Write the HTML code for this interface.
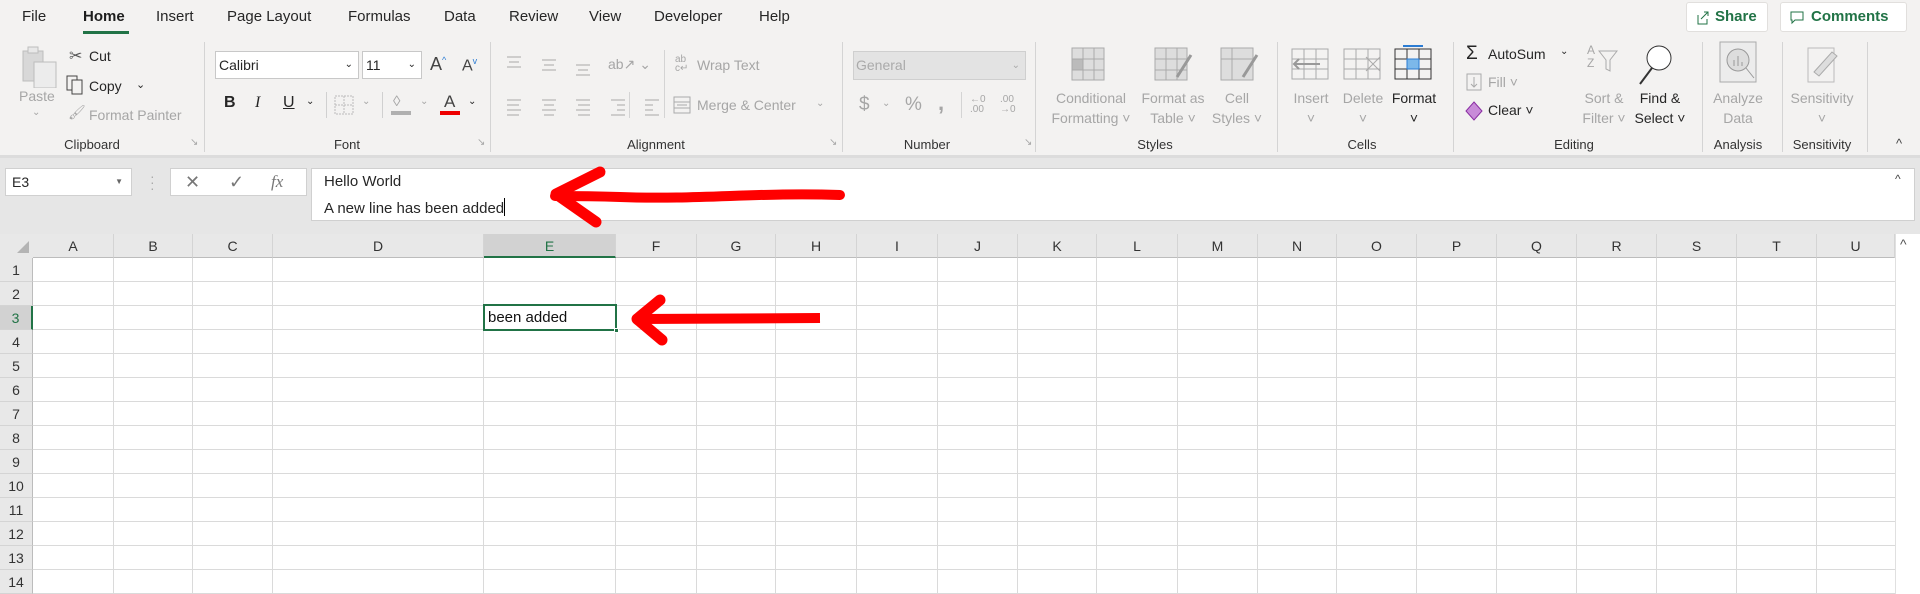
<!DOCTYPE html>
<html><head><meta charset="utf-8">
<style>
*{margin:0;padding:0;box-sizing:border-box}
body{width:1920px;height:594px;overflow:hidden;background:#fff;font-family:"Liberation Sans",sans-serif;position:relative;color:#262626}
.a{position:absolute;white-space:nowrap}
.tab{position:absolute;top:8px;font-size:15px;color:#262626}
.lbl{position:absolute;top:137px;font-size:13px;color:#333;transform:translateX(-50%)}
.g{color:#a6a6a6}
.sep{position:absolute;top:42px;width:1px;height:110px;background:#d4d4d4}
.rb{font-size:14px}
.ch{position:absolute;top:234px;height:24px;font-size:14px;color:#333;text-align:center;line-height:24px;border-right:1px solid #d4d4d4;border-bottom:1px solid #bcbcbc;background:#e8e8e8}
.rh{position:absolute;left:0;width:33px;height:24px;font-size:14px;color:#333;text-align:center;line-height:24px;border-bottom:1px solid #d4d4d4;border-right:1px solid #bcbcbc;background:#e8e8e8}
.vl{position:absolute;top:258px;width:1px;height:336px;background:#dadada}
.hl{position:absolute;left:33px;width:1862px;height:1px;background:#dadada}
.t2{font-size:14px;transform:translateX(-50%);text-align:center;line-height:20px}
</style></head><body>
<div class="a" style="left:0;top:0;width:1920px;height:157px;background:#f3f2f1"></div>
<div class="a" style="left:0;top:155px;width:1920px;height:79px;background:#e6e6e6"></div>
<div class="a" style="left:0;top:155px;width:1920px;height:3px;background:#dcdcdc"></div>

<div class="tab" style="left:22px">File</div>
<div class="tab" style="left:83px;color:#1e1e1e;font-weight:bold">Home</div>
<div class="a" style="left:83px;top:31px;width:46px;height:3px;background:#217346"></div>
<div class="tab" style="left:156px">Insert</div>
<div class="tab" style="left:227px">Page Layout</div>
<div class="tab" style="left:348px">Formulas</div>
<div class="tab" style="left:444px">Data</div>
<div class="tab" style="left:509px">Review</div>
<div class="tab" style="left:589px">View</div>
<div class="tab" style="left:654px">Developer</div>
<div class="tab" style="left:759px">Help</div>

<div class="a" style="left:1686px;top:2px;width:82px;height:30px;background:#fff;border:1px solid #e1dfdd;border-radius:3px;color:#217346;font-weight:bold;font-size:15px;line-height:28px;padding-left:28px">Share
<svg style="position:absolute;left:8px;top:7px" width="14" height="15"><path d="M3 5v9h9V9M6 9l7-7M9 2h4v4" stroke="#217346" fill="none"/></svg></div>
<div class="a" style="left:1780px;top:2px;width:127px;height:30px;background:#fff;border:1px solid #e1dfdd;border-radius:3px;color:#217346;font-weight:bold;font-size:15px;line-height:28px;padding-left:30px">Comments
<svg style="position:absolute;left:9px;top:8px" width="14" height="14"><path d="M1 1h12v8H5l-3 3V9H1z" stroke="#217346" fill="none"/></svg></div>

<div class="sep" style="left:204px"></div><div class="sep" style="left:490px"></div><div class="sep" style="left:842px"></div>
<div class="sep" style="left:1035px"></div><div class="sep" style="left:1277px"></div><div class="sep" style="left:1453px"></div>
<div class="sep" style="left:1702px"></div><div class="sep" style="left:1782px"></div><div class="sep" style="left:1867px"></div>

<div class="lbl" style="left:92px">Clipboard</div><div class="lbl" style="left:347px">Font</div><div class="lbl" style="left:656px">Alignment</div>
<div class="lbl" style="left:927px">Number</div><div class="lbl" style="left:1155px">Styles</div><div class="lbl" style="left:1362px">Cells</div>
<div class="lbl" style="left:1574px">Editing</div><div class="lbl" style="left:1738px">Analysis</div><div class="lbl" style="left:1822px">Sensitivity</div>
<div class="a g" style="left:190px;top:137px;font-size:10px">↘</div><div class="a g" style="left:477px;top:137px;font-size:10px">↘</div>
<div class="a g" style="left:829px;top:137px;font-size:10px">↘</div><div class="a g" style="left:1024px;top:137px;font-size:10px">↘</div>
<div class="a" style="left:1896px;top:136px;font-size:13px;color:#444">^</div>

<!-- clipboard -->
<svg class="a" style="left:22px;top:46px" width="36" height="42"><rect x="1" y="5" width="20" height="30" fill="#d8d8d8" stroke="#bdbdbd"/><rect x="6" y="1" width="10" height="6" fill="#e8e8e8" stroke="#bdbdbd"/><rect x="12" y="16" width="22" height="26" fill="#ececec" stroke="#bdbdbd"/></svg>
<div class="a g" style="left:19px;top:88px;font-size:14px">Paste</div>
<div class="a g" style="left:32px;top:107px;font-size:10px">⌄</div>
<div class="a" style="left:69px;top:46px;font-size:16px;color:#555">✂</div>
<div class="a rb" style="left:89px;top:48px">Cut</div>
<svg class="a" style="left:66px;top:75px" width="18" height="20"><rect x="1" y="1" width="10" height="14" fill="none" stroke="#444"/><rect x="6" y="5" width="10" height="14" fill="#f3f2f1" stroke="#444"/></svg>
<div class="a rb" style="left:89px;top:78px">Copy</div><div class="a" style="left:136px;top:78px;font-size:11px">⌄</div>
<div class="a g" style="left:68px;top:104px;font-size:14px">🖌</div>
<div class="a g rb" style="left:89px;top:107px">Format Painter</div>

<!-- font -->
<div class="a" style="left:215px;top:51px;width:144px;height:28px;background:#fff;border:1px solid #c8c8c8;font-size:14px;line-height:26px;padding-left:3px">Calibri<span style="position:absolute;right:5px;font-size:10px">⌄</span></div>
<div class="a" style="left:362px;top:51px;width:60px;height:28px;background:#fff;border:1px solid #c8c8c8;font-size:14px;line-height:26px;padding-left:3px">11<span style="position:absolute;right:5px;font-size:10px">⌄</span></div>
<div class="a" style="left:430px;top:54px;font-size:18px;color:#444">A<sup style="font-size:9px;color:#2b7cd3">^</sup></div>
<div class="a" style="left:462px;top:56px;font-size:16px;color:#444">A<sup style="font-size:9px;color:#2b7cd3">v</sup></div>
<div class="a" style="left:224px;top:94px;font-size:16px;font-weight:bold">B</div>
<div class="a" style="left:255px;top:94px;font-size:16px;font-style:italic;font-family:'Liberation Serif',serif">I</div>
<div class="a" style="left:283px;top:94px;font-size:16px;text-decoration:underline">U</div>
<div class="a" style="left:306px;top:96px;font-size:10px">⌄</div>
<div class="a" style="left:326px;top:92px;width:1px;height:26px;background:#d0d0d0"></div>
<svg class="a" style="left:334px;top:95px" width="20" height="20"><rect x="1" y="1" width="18" height="18" fill="none" stroke="#bbb" stroke-dasharray="2 1"/><path d="M10 1v18M1 10h18" stroke="#bbb" stroke-dasharray="2 1"/></svg>
<div class="a g" style="left:362px;top:96px;font-size:10px">⌄</div>
<div class="a" style="left:382px;top:92px;width:1px;height:26px;background:#d0d0d0"></div>
<div class="a g" style="left:393px;top:93px;font-size:15px">◊</div>
<div class="a" style="left:391px;top:111px;width:20px;height:4px;background:#b0b0b0"></div>
<div class="a g" style="left:420px;top:96px;font-size:10px">⌄</div>
<div class="a" style="left:444px;top:92px;font-size:17px;color:#444">A</div>
<div class="a" style="left:440px;top:111px;width:20px;height:4px;background:#e00"></div>
<div class="a" style="left:468px;top:96px;font-size:10px">⌄</div>

<!-- alignment -->
<svg class="a" style="left:505px;top:55px" width="170" height="70" stroke="#a8a8a8">
<path d="M2 2h14M4 7h10M2 12h14M37 5h14M39 10h10M37 15h14M71 10h14M73 15h10M71 20h14"/>
<path d="M2 45h14M2 50h12M2 55h14M2 60h12M37 45h14M39 50h10M37 55h14M39 60h10M71 45h14M73 50h12M71 55h14M73 60h12M106 45h14M112 50h8M112 55h8M106 60h14M140 45h14M140 50h8M140 55h8M140 60h14"/>
</svg>
<div class="a" style="left:629px;top:92px;width:1px;height:26px;background:#d4d4d4"></div>
<div class="a g" style="left:608px;top:56px;font-size:14px">ab↗ ⌄</div>
<div class="a" style="left:664px;top:50px;width:1px;height:68px;background:#d4d4d4"></div>
<div class="a g" style="left:675px;top:55px;font-size:10px;line-height:9px">ab<br>c↵</div>
<div class="a g" style="left:697px;top:57px;font-size:14px">Wrap Text</div>
<svg class="a" style="left:673px;top:96px" width="18" height="18"><rect x="1" y="1" width="16" height="16" fill="none" stroke="#aaa"/><path d="M1 6h16M1 12h16M4 9h10" stroke="#aaa"/></svg>
<div class="a g" style="left:697px;top:97px;font-size:14px">Merge &amp; Center</div>
<div class="a g" style="left:816px;top:98px;font-size:10px">⌄</div>

<!-- number -->
<div class="a" style="left:853px;top:51px;width:173px;height:29px;background:#e3e3e3;border:1px solid #cfcfcf;font-size:14px;line-height:27px;padding-left:2px;color:#aaa">General<span style="position:absolute;right:5px;font-size:10px">⌄</span></div>
<div class="a g" style="left:859px;top:94px;font-size:19px">$</div>
<div class="a g" style="left:882px;top:98px;font-size:10px">⌄</div>
<div class="a g" style="left:905px;top:94px;font-size:19px">%</div>
<div class="a g" style="left:938px;top:90px;font-size:22px;font-weight:bold">,</div>
<div class="a" style="left:961px;top:92px;width:1px;height:26px;background:#d4d4d4"></div>
<div class="a g" style="left:970px;top:95px;font-size:10px;line-height:10px">←0<br>.00</div>
<div class="a g" style="left:1000px;top:95px;font-size:10px;line-height:10px">.00<br>→0</div>

<!-- styles -->
<svg class="a" style="left:1071px;top:47px" width="190" height="40" fill="#ddd" stroke="#aaa">
<rect x="1" y="1" width="32" height="32"/><path d="M1 12h32M1 23h32M12 1v32M23 1v32" fill="none"/><rect x="1" y="12" width="11" height="11" fill="#bbb"/>
<rect x="84" y="1" width="32" height="32"/><path d="M84 12h32M84 23h32M95 1v32M106 1v32" fill="none"/><path d="M120 8l-14 22" stroke="#999" stroke-width="3"/>
<rect x="150" y="1" width="32" height="32"/><path d="M150 12h32M161 1v32" fill="none"/><path d="M186 8l-14 22" stroke="#999" stroke-width="3"/></svg>
<div class="a g t2" style="left:1091px;top:88px">Conditional<br>Formatting ˅</div>
<div class="a g t2" style="left:1173px;top:88px">Format as<br>Table ˅</div>
<div class="a g t2" style="left:1237px;top:88px">Cell<br>Styles ˅</div>

<!-- cells -->
<svg class="a" style="left:1291px;top:45px" width="150" height="45" stroke="#aaa" fill="none">
<rect x="1" y="4" width="36" height="30"/><path d="M1 14h36M1 24h36M13 4v30M25 4v30"/><path d="M4 19h25M8 14l-5 5 5 5" stroke="#999" stroke-width="2"/>
<rect x="53" y="4" width="36" height="30"/><path d="M53 14h36M53 24h36M65 4v30M77 4v30"/><path d="M75 12l14 14M89 12l-14 14"/>
<rect x="104" y="4" width="36" height="30" stroke="#333"/><path d="M104 14h36M104 24h36M116 4v30M128 4v30" stroke="#333"/><rect x="116" y="14" width="12" height="10" fill="#7cb8ea" stroke="#2b7cd3"/><path d="M112 1h20" stroke="#2b7cd3" stroke-width="2"/></svg>
<div class="a g t2" style="left:1311px;top:88px">Insert<br>˅</div>
<div class="a g t2" style="left:1363px;top:88px">Delete<br>˅</div>
<div class="a t2" style="left:1414px;top:88px">Format<br>˅</div>

<!-- editing -->
<div class="a" style="left:1466px;top:43px;font-size:19px">Σ</div>
<div class="a" style="left:1488px;top:46px;font-size:14px">AutoSum</div>
<div class="a" style="left:1560px;top:46px;font-size:10px">⌄</div>
<svg class="a" style="left:1466px;top:73px" width="16" height="18"><rect x="1" y="1" width="14" height="16" fill="none" stroke="#aaa"/><path d="M8 4v10M5 11l3 3 3-3" stroke="#aaa" fill="none"/></svg>
<div class="a g" style="left:1488px;top:74px;font-size:14px">Fill ˅</div>
<svg class="a" style="left:1465px;top:101px" width="18" height="20"><path d="M9 1l8 9-8 9-8-9z" fill="#c88bd8" stroke="#8a2ea3"/></svg>
<div class="a" style="left:1488px;top:102px;font-size:14px">Clear ˅</div>
<div class="a g" style="left:1587px;top:44px;font-size:12px;line-height:13px">A<br>Z</div>
<svg class="a" style="left:1598px;top:50px" width="20" height="22"><path d="M1 1h18l-7 9v11l-4-2V10z" fill="none" stroke="#aaa"/></svg>
<svg class="a" style="left:1637px;top:44px" width="36" height="42"><circle cx="22" cy="14" r="12" fill="#fff" stroke="#333"/><path d="M15 24L3 40" stroke="#333" stroke-width="2"/></svg>
<div class="a g t2" style="left:1604px;top:88px">Sort &amp;<br>Filter ˅</div>
<div class="a t2" style="left:1660px;top:88px">Find &amp;<br>Select ˅</div>

<svg class="a" style="left:1718px;top:40px" width="40" height="46"><rect x="2" y="2" width="36" height="40" fill="#ececec" stroke="#aaa"/><circle cx="20" cy="20" r="11" fill="#ddd" stroke="#999"/><path d="M16 26v-6M20 26v-10M24 26v-4M28 28l8 10" stroke="#999"/></svg>
<div class="a g t2" style="left:1738px;top:88px">Analyze<br>Data</div>
<svg class="a" style="left:1806px;top:40px" width="34" height="46"><rect x="2" y="8" width="26" height="34" fill="none" stroke="#bbb"/><path d="M8 32l18-20 5 4-18 20z" fill="#ddd" stroke="#aaa"/></svg>
<div class="a g t2" style="left:1822px;top:88px">Sensitivity<br>˅</div>

<!-- formula bar -->
<div class="a" style="left:5px;top:168px;width:127px;height:28px;background:#fff;border:1px solid #d0d0d0;font-size:14px;line-height:26px;padding-left:6px">E3<span style="position:absolute;right:8px;font-size:8px;color:#666">▼</span></div>
<div class="a" style="left:150px;top:173px;color:#aaa;font-size:14px;line-height:6px">·<br>·<br>·</div>
<div class="a" style="left:170px;top:168px;width:137px;height:28px;background:#fff;border:1px solid #d0d0d0;font-size:18px;line-height:26px;color:#777">
<span style="position:absolute;left:14px">✕</span><span style="position:absolute;left:58px">✓</span><span style="position:absolute;left:100px;font-family:'Liberation Serif',serif;font-style:italic;font-size:17px">fx</span></div>
<div class="a" style="left:311px;top:168px;width:1604px;height:53px;background:#fff;border:1px solid #d0d0d0"></div>
<div class="a" style="left:324px;top:173px;font-size:15px">Hello World</div>
<div class="a" style="left:324px;top:198px;font-size:15px">A new line has been added<span style="display:inline-block;width:1px;height:18px;background:#000;vertical-align:-3px"></span></div>
<div class="a" style="left:1895px;top:172px;font-size:12px;color:#444">^</div>

<div class="a" style="left:0;top:234px;width:1895px;height:24px;background:#e8e8e8"></div>
<svg class="a" style="left:16px;top:240px" width="14" height="14"><path d="M13 1v12H1z" fill="#b4b4b4"/></svg>
<div class="ch" style="left:33px;width:81px">A</div><div class="ch" style="left:114px;width:79px">B</div><div class="ch" style="left:193px;width:80px">C</div>
<div class="ch" style="left:273px;width:211px">D</div>
<div class="ch" style="left:484px;width:132px;background:#d2d2d2;color:#217346;border-bottom:2px solid #217346">E</div>
<div class="ch" style="left:616px;width:81px">F</div><div class="ch" style="left:697px;width:79px">G</div><div class="ch" style="left:776px;width:81px">H</div>
<div class="ch" style="left:857px;width:81px">I</div><div class="ch" style="left:938px;width:80px">J</div><div class="ch" style="left:1018px;width:79px">K</div>
<div class="ch" style="left:1097px;width:81px">L</div><div class="ch" style="left:1178px;width:80px">M</div><div class="ch" style="left:1258px;width:79px">N</div>
<div class="ch" style="left:1337px;width:80px">O</div><div class="ch" style="left:1417px;width:80px">P</div><div class="ch" style="left:1497px;width:80px">Q</div>
<div class="ch" style="left:1577px;width:80px">R</div><div class="ch" style="left:1657px;width:80px">S</div><div class="ch" style="left:1737px;width:80px">T</div>
<div class="ch" style="left:1817px;width:78px">U</div>
<div class="a" style="left:1895px;top:234px;width:25px;height:360px;background:#fff;border-left:1px solid #e0e0e0"></div>
<div class="a" style="left:1900px;top:236px;font-size:14px;color:#555">^</div>

<div class="rh" style="top:258px">1</div><div class="rh" style="top:282px">2</div>
<div class="rh" style="top:306px;background:#d2d2d2;color:#217346;border-right:2px solid #217346">3</div>
<div class="rh" style="top:330px">4</div><div class="rh" style="top:354px">5</div><div class="rh" style="top:378px">6</div>
<div class="rh" style="top:402px">7</div><div class="rh" style="top:426px">8</div><div class="rh" style="top:450px">9</div>
<div class="rh" style="top:474px">10</div><div class="rh" style="top:498px">11</div><div class="rh" style="top:522px">12</div>
<div class="rh" style="top:546px">13</div><div class="rh" style="top:570px">14</div>

<div class="vl" style="left:113px"></div><div class="vl" style="left:192px"></div><div class="vl" style="left:272px"></div>
<div class="vl" style="left:483px"></div><div class="vl" style="left:615px"></div><div class="vl" style="left:696px"></div>
<div class="vl" style="left:775px"></div><div class="vl" style="left:856px"></div><div class="vl" style="left:937px"></div>
<div class="vl" style="left:1017px"></div><div class="vl" style="left:1096px"></div><div class="vl" style="left:1177px"></div>
<div class="vl" style="left:1257px"></div><div class="vl" style="left:1336px"></div><div class="vl" style="left:1416px"></div>
<div class="vl" style="left:1496px"></div><div class="vl" style="left:1576px"></div><div class="vl" style="left:1656px"></div>
<div class="vl" style="left:1736px"></div><div class="vl" style="left:1816px"></div>
<div class="hl" style="top:281px"></div><div class="hl" style="top:305px"></div><div class="hl" style="top:329px"></div>
<div class="hl" style="top:353px"></div><div class="hl" style="top:377px"></div><div class="hl" style="top:401px"></div>
<div class="hl" style="top:425px"></div><div class="hl" style="top:449px"></div><div class="hl" style="top:473px"></div>
<div class="hl" style="top:497px"></div><div class="hl" style="top:521px"></div><div class="hl" style="top:545px"></div>
<div class="hl" style="top:569px"></div><div class="hl" style="top:593px"></div>

<div class="a" style="left:483px;top:304px;width:134px;height:27px;border:2px solid #217346;background:#fff;font-size:15px;line-height:23px;padding-left:3px;color:#111">been added</div>
<div class="a" style="left:614px;top:328px;width:5px;height:5px;background:#217346;border:1px solid #fff"></div>

<svg class="a" style="left:0;top:0" width="1920" height="594">
<path d="M840 195 C760 192 700 200 620 197 C590 196 570 196 555 196" stroke="#f00" stroke-width="10" fill="none" stroke-linecap="round"/>
<path d="M600 172 L556 194 L596 222" stroke="#f00" stroke-width="11" fill="none" stroke-linejoin="round" stroke-linecap="round"/>
<path d="M820 318 L640 319" stroke="#f00" stroke-width="10" fill="none"/>
<path d="M660 300 L637 319 L662 340" stroke="#f00" stroke-width="11" fill="none" stroke-linejoin="round" stroke-linecap="round"/>
</svg>
</body></html>
